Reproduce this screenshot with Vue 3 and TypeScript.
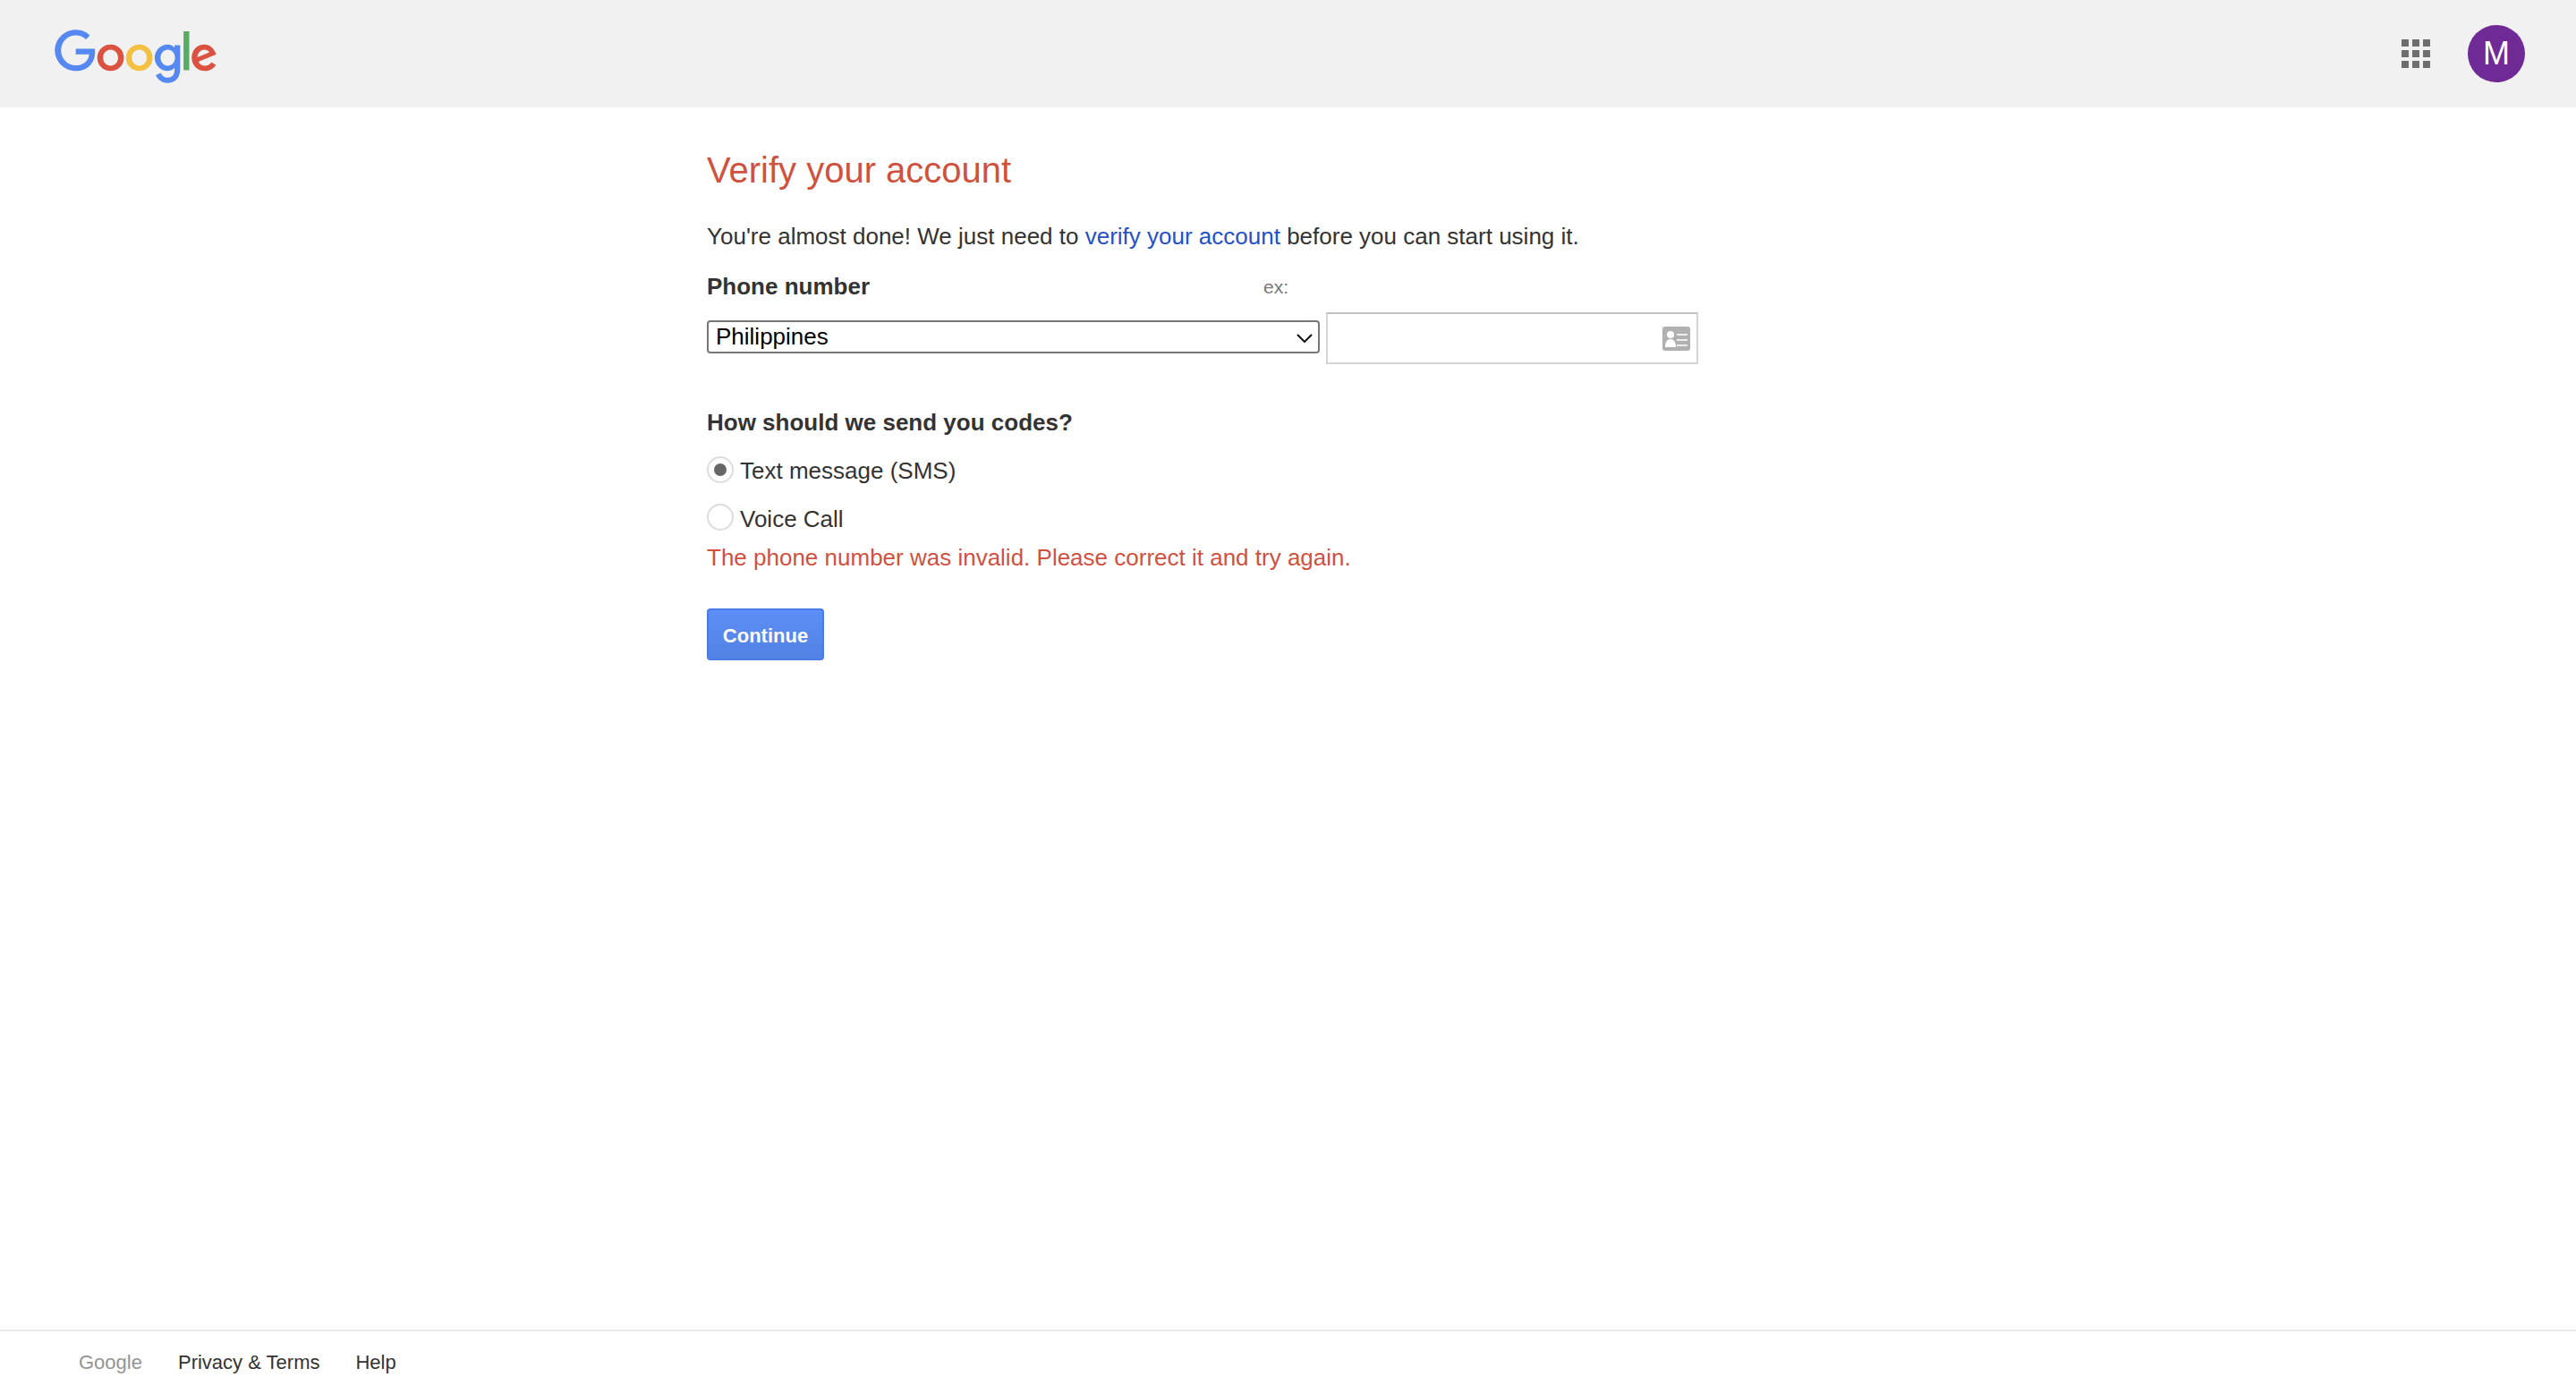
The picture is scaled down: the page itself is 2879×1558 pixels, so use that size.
<script setup lang="ts">
const gridCells: number[] = [0, 1, 2, 3, 4, 5, 6, 7, 8]
const footerLinks: string[] = ['Privacy & Terms', 'Help']
</script>

<template>
  <div class="page">
    <header class="topbar">
      <svg class="logo" viewBox="0 0 272 92" aria-label="Google">
        <path fill="#DC5240" d="M115.75 47.18c0 12.77-9.99 22.18-22.25 22.18s-22.25-9.41-22.25-22.18C71.25 34.32 81.24 25 93.5 25s22.25 9.32 22.25 22.18zm-9.74 0c0-7.98-5.79-13.44-12.51-13.44S80.99 39.2 80.99 47.18c0 7.9 5.79 13.44 12.51 13.44s12.51-5.55 12.51-13.44z" />
        <path fill="#F4C042" d="M163.75 47.18c0 12.77-9.99 22.18-22.25 22.18s-22.25-9.41-22.25-22.18c0-12.85 9.99-22.18 22.25-22.18s22.25 9.32 22.25 22.18zm-9.74 0c0-7.98-5.79-13.44-12.51-13.44s-12.51 5.46-12.51 13.44c0 7.9 5.79 13.44 12.51 13.44s12.51-5.55 12.51-13.44z" />
        <path fill="#5588F0" d="M209.75 26.34v39.82c0 16.38-9.66 23.07-21.08 23.07-10.75 0-17.22-7.19-19.66-13.07l8.48-3.53c1.51 3.61 5.21 7.87 11.17 7.87 7.31 0 11.84-4.51 11.84-13v-3.19h-.34c-2.18 2.69-6.38 5.04-11.68 5.04-11.09 0-21.25-9.66-21.25-22.09 0-12.52 10.16-22.26 21.25-22.26 5.29 0 9.49 2.35 11.68 4.96h.34v-3.61h9.25zm-8.56 20.92c0-7.81-5.21-13.52-11.84-13.52-6.72 0-12.35 5.71-12.35 13.52 0 7.73 5.63 13.36 12.35 13.36 6.63 0 11.84-5.63 11.84-13.36z" />
        <path fill="#58AB62" d="M225 3v65h-9.5V3h9.5z" />
        <path fill="#DC5240" d="M262.02 54.48l7.56 5.04c-2.44 3.61-8.32 9.83-18.48 9.83-12.6 0-22.01-9.74-22.01-22.18 0-13.19 9.49-22.18 20.92-22.18 11.51 0 17.14 9.16 18.98 14.11l1.01 2.52-29.65 12.28c2.27 4.45 5.8 6.72 10.75 6.72 4.96 0 8.4-2.44 10.92-6.14zm-23.27-7.98l19.82-8.23c-1.09-2.77-4.37-4.7-8.23-4.7-4.95 0-11.84 4.37-11.59 12.93z" />
        <path fill="#5588F0" d="M35.29 41.41V32H67c.31 1.64.47 3.58.47 5.68 0 7.06-1.93 15.79-8.15 22.01-6.05 6.3-13.78 9.66-24.02 9.66C16.32 69.35.36 53.89.36 34.91.36 15.93 16.32.47 35.3.47c10.5 0 17.98 4.12 23.6 9.49l-6.64 6.64c-4.03-3.78-9.49-6.72-16.97-6.72-13.86 0-24.7 11.17-24.7 25.03 0 13.86 10.84 25.03 24.7 25.03 8.99 0 14.11-3.61 17.39-6.89 2.66-2.66 4.41-6.46 5.1-11.65l-22.49.01z" />
      </svg>
      <div class="actions">
        <div class="apps">
          <span v-for="cell in gridCells" :key="cell" class="apps-dot"></span>
        </div>
        <div class="avatar">M</div>
      </div>
    </header>

    <main class="content">
      <h1 class="title">Verify your account</h1>
      <p class="intro">You're almost done! We just need to <a class="link">verify your account</a> before you can start using it.</p>

      <div class="phone-labels">
        <label class="bold-label">Phone number</label>
        <span class="example">ex:</span>
      </div>
      <div class="phone-row">
        <div class="select-wrap">
          <select class="country">
            <option>Philippines</option>
          </select>
          <svg class="chevron" viewBox="0 0 18 10"><path d="M1 1l8 8 8-8" fill="none" stroke="#111" stroke-width="2" /></svg>
        </div>
        <div class="phone-input-wrap">
          <input class="phone-input" type="text" />
          <svg class="id-icon" viewBox="0 0 31 27">
            <rect width="31" height="27" rx="3" fill="#b0b0b0" />
            <circle cx="9" cy="9" r="4" fill="#fff" />
            <path d="M3 23c0-6 2.5-9 6-9s6 3 6 9z" fill="#fff" />
            <path d="M16 9h12M16 15h12M16 21h12" stroke="#fff" stroke-width="1.6" />
          </svg>
        </div>
      </div>

      <div class="bold-label codes">How should we send you codes?</div>
      <div class="radio first">
        <span class="radio-mark"><span class="radio-dot"></span></span>
        <span>Text message (SMS)</span>
      </div>
      <div class="radio second">
        <span class="radio-mark"></span>
        <span>Voice Call</span>
      </div>
      <p class="error">The phone number was invalid. Please correct it and try again.</p>
      <button class="continue" type="button">Continue</button>
    </main>

    <footer class="footer">
      <span class="footer-brand">Google</span>
      <a v-for="link in footerLinks" :key="link" class="footer-link">{{ link }}</a>
    </footer>
  </div>
</template>

<style scoped>
.page {
  min-height: 100vh;
  display: flex;
  flex-direction: column;
  background: #fff;
  color: #333;
  font-family: "Liberation Sans", Arial, sans-serif;
  font-size: 26px;
  line-height: 36px;
}
.topbar {
  height: 120px;
  flex: none;
  display: flex;
  align-items: center;
  justify-content: space-between;
  padding: 0 57px 0 61px;
  background: #f1f1f1;
}
.logo {
  width: 182px;
  height: 61.5px;
  margin-top: 8px;
  display: block;
}
.actions {
  display: flex;
  align-items: center;
  gap: 42px;
}
.apps {
  display: grid;
  grid-template-columns: repeat(3, 8px);
  grid-auto-rows: 8px;
  gap: 4px;
}
.apps-dot {
  background: #6f6f6f;
}
.avatar {
  width: 64px;
  height: 64px;
  border-radius: 50%;
  background: #702a96;
  color: #fff;
  font-size: 36px;
  line-height: 64px;
  text-align: center;
}
.content {
  flex: 1;
  padding-left: 790px;
}
.title {
  margin: 47px 0 0;
  font-size: 40px;
  line-height: 46px;
  font-weight: 400;
  color: #cf523f;
}
.intro {
  margin: 33px 0 0;
}
.link {
  color: #2450c8;
}
.phone-labels {
  margin-top: 20px;
  width: 650px;
  display: flex;
  justify-content: space-between;
}
.bold-label {
  font-weight: 700;
}
.example {
  font-size: 21px;
  line-height: 34px;
  margin-top: 2px;
  color: #777;
}
.phone-row {
  margin-top: 11px;
  display: flex;
  align-items: center;
  gap: 7px;
}
.select-wrap {
  position: relative;
  width: 685px;
  height: 37px;
  margin-bottom: 3px;
}
.country {
  appearance: none;
  width: 100%;
  height: 100%;
  box-sizing: border-box;
  border: 2px solid #767676;
  border-radius: 4px;
  background: #fff;
  color: #000;
  font-family: inherit;
  font-size: 26px;
  padding: 0 0 1px 8px;
  margin: 0;
  outline: none;
}
.chevron {
  position: absolute;
  right: 8px;
  top: 15px;
  width: 18px;
  height: 10px;
}
.phone-input-wrap {
  position: relative;
  width: 416px;
  height: 58px;
}
.phone-input {
  width: 100%;
  height: 100%;
  box-sizing: border-box;
  border: 2px solid #d4d4d4;
  border-top-color: #c0c0c0;
  background: #fff;
  margin: 0;
  padding: 0 8px;
  outline: none;
}
.id-icon {
  position: absolute;
  right: 9px;
  top: 16px;
  width: 31px;
  height: 27px;
}
.codes {
  margin-top: 47px;
}
.radio {
  display: flex;
  align-items: center;
  gap: 7px;
}
.radio.first {
  margin-top: 18px;
}
.radio.second {
  margin-top: 18px;
}
.radio-mark {
  width: 30px;
  height: 30px;
  box-sizing: border-box;
  border: 2px solid #dcdcdc;
  border-radius: 50%;
  display: flex;
  align-items: center;
  justify-content: center;
  margin-top: -3px;
  flex: none;
}
.radio.second .radio-mark {
  margin-top: -5px;
}
.radio-dot {
  width: 14px;
  height: 14px;
  border-radius: 50%;
  background: #666;
}
.error {
  margin: 7px 0 0;
  color: #cf513f;
}
.continue {
  display: block;
  margin: 39px 0 0;
  width: 131px;
  height: 58px;
  box-sizing: border-box;
  border: 2px solid #4a7be6;
  border-radius: 4px;
  background: linear-gradient(#5c8ef6, #5282e3);
  color: #fff;
  font-family: inherit;
  font-size: 22px;
  font-weight: 700;
  padding: 3px 0 0;
}
.footer {
  flex: none;
  height: 72px;
  box-sizing: border-box;
  border-top: 2px solid #e8e8e8;
  padding-left: 88px;
  display: flex;
  align-items: center;
  gap: 40px;
  font-size: 22px;
}
.footer-brand {
  color: #959595;
}
.footer-link {
  color: #333;
}
</style>
